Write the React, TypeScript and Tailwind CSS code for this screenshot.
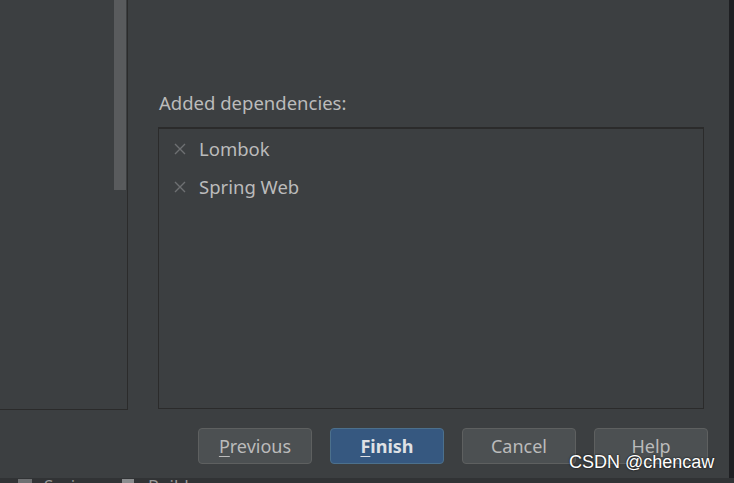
import React from "react";

const font = { fontFamily: '"Segoe UI", "Noto Sans", "Open Sans", sans-serif' };

function Btn({ label, u, primary }: { label: string; u?: boolean; primary?: boolean }) {
  const first = label[0];
  const rest = label.slice(1);
  return (
    <div
      className={
        "w-[114px] h-[36px] rounded-[4px] border flex items-center justify-center text-[18px] " +
        (primary
          ? "bg-[#365880] border-[#4c708c] text-[#dfe1e5] font-bold"
          : "bg-[#4c5052] border-[#5e6060] text-[#bbbbbb]")
      }
    >
      {u ? (
        <span>
          <span className="underline underline-offset-[3px]">{first}</span>
          {rest}
        </span>
      ) : (
        <span>{label}</span>
      )}
    </div>
  );
}

export default function App() {
  return (
    <div className="w-[734px] h-[483px] bg-[#3c3f41] relative overflow-hidden flex flex-col" style={font}>
      <div className="flex h-[478px]">
        <div className="flex-1 flex flex-col">
          <div className="flex flex-1">
            {/* left panel */}
            <div className="w-[128px] flex flex-col">
              <div className="h-[410px] border-r border-b border-[#2b2b2b] relative">
                <div className="absolute left-[114px] top-0 w-[12px] h-[190px] bg-[#595b5d]" />
              </div>
            </div>
            {/* right content */}
            <div className="flex-1 flex flex-col pl-[30px] pr-[25px]">
              <div className="h-[91px]" />
              <div className="text-[18.5px] leading-[24px] text-[#bbbbbb] pl-[1px]">Added dependencies:</div>
              <div className="h-[12px]" />
              <div className="h-[282px] border border-t-2 border-[#2b2b2b] pt-[6px] pl-[15px] flex flex-col gap-[10px]">
                {["Lombok", "Spring Web"].map((t) => (
                  <div key={t} className="flex items-center h-[28px]">
                    <svg width="12" height="12" viewBox="0 0 12 12" className="mr-[13px]">
                      <path d="M1 1 L11 11 M11 1 L1 11" stroke="#6e7072" strokeWidth="1.4" />
                    </svg>
                    <span className="text-[18.5px] text-[#bbbbbb]">{t}</span>
                  </div>
                ))}
              </div>
            </div>
          </div>
          <div className="h-[68px] flex items-start pt-[18px] pl-[198px] gap-[18px]">
            <Btn label="Previous" u />
            <Btn label="Finish" u primary />
            <Btn label="Cancel" />
            <Btn label="Help" />
          </div>
        </div>
        <div className="w-[5px] bg-[#1e1f22]" />
      </div>
      <div className="h-[5px] bg-[#313335] relative">
        <div className="absolute left-[18px] top-[1px] w-[14px] h-[4px] bg-[#6e7072]" />
        <span className="absolute left-[44px] top-[-4px] leading-[24px] text-[17px] text-[#999999]">Spring</span>
        <div className="absolute left-[122px] top-[1px] w-[12px] h-[4px] bg-[#8a8c8e]" />
        <span className="absolute left-[148px] top-[-4px] leading-[24px] text-[17px] text-[#999999]">Build</span>
      </div>
      <div
        className="absolute left-[569px] top-[449px] text-[18px] text-white"
        style={{ fontFamily: '"Liberation Sans", Arial, sans-serif', textShadow: "0 0 2px #000" }}
      >
        CSDN @chencaw
      </div>
    </div>
  );
}
